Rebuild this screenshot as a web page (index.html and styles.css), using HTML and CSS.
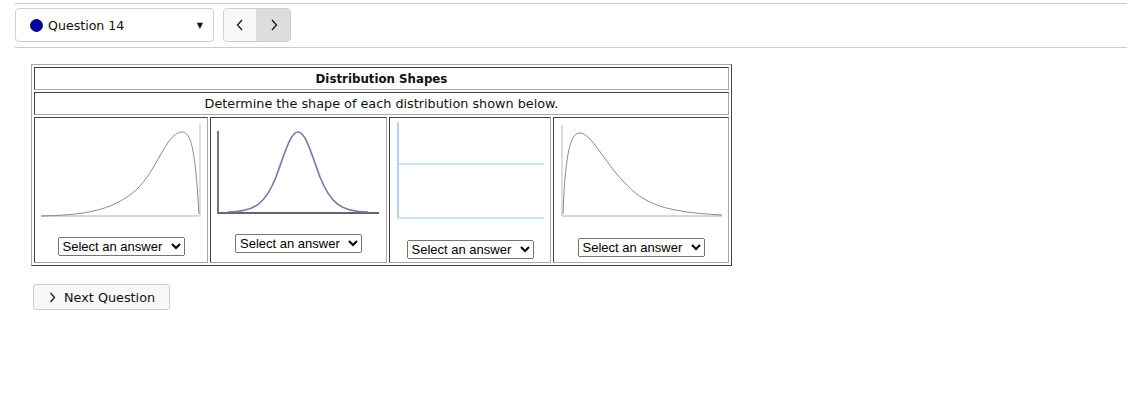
FILE: index.html
```html
<!DOCTYPE html>
<html lang="en">
<head>
    <meta charset="UTF-8">
    <title>Question 14</title>
    <link rel="stylesheet" href="styles.css">
</head>
<body>
    <div class="topbar">
        <div class="question-picker">
            <span class="dot"></span>
            <span class="question-label">Question 14</span>
            <span class="caret">&#9660;</span>
        </div>
        <div class="nav-group">
            <button class="nav-btn prev">
                <svg width="8" height="12" viewBox="0 0 8 12"><path d="M6 1 L1.5 6 L6 11" fill="none" stroke="#222" stroke-width="1.4"/></svg>
            </button>
            <button class="nav-btn next">
                <svg width="8" height="12" viewBox="0 0 8 12"><path d="M2 1 L6.5 6 L2 11" fill="none" stroke="#222" stroke-width="1.4"/></svg>
            </button>
        </div>
    </div>

    <table class="shapes">
        <tr>
            <td colspan="4" class="title">Distribution Shapes</td>
        </tr>
        <tr>
            <td colspan="4" class="intro">Determine the shape of each distribution shown below.</td>
        </tr>
        <tr class="graphs">
            <td class="cell-a">
                <!-- skewed left -->
                <svg class="graph" width="160" height="96" viewBox="0 0 160 96">
                    <line x1="0" y1="94" x2="158" y2="94" stroke="#c8c8c8" stroke-width="1.5"/>
                    <line x1="159" y1="2" x2="159" y2="94" stroke="#c8c8c8" stroke-width="1.2"/>
                    <path d="M0 94 C40 93 70 90 95 68 C115 50 125 12 140 10 C150 9 154 25 158 92" fill="none" stroke="#8a8a8a" stroke-width="1"/>
                </svg>
                <div class="answer"><select><option>Select an answer</option></select></div>
            </td>
            <td class="cell-b">
                <!-- bell -->
                <svg class="graph" width="165" height="89" viewBox="0 0 165 89">
                    <line x1="2" y1="4" x2="2" y2="87" stroke="#555" stroke-width="1.6"/>
                    <line x1="2" y1="86" x2="163" y2="86" stroke="#666" stroke-width="2"/>
                    <path d="M12 85 C40 85 50 75 60 50 C70 22 75 5 82 5 C89 5 94 22 104 50 C114 75 124 85 152 85" fill="none" stroke="#7878a8" stroke-width="1.6"/>
                </svg>
                <div class="answer"><select><option>Select an answer</option></select></div>
            </td>
            <td class="cell-c">
                <!-- uniform -->
                <svg class="graph" width="149" height="101" viewBox="0 0 149 101">
                    <line x1="2" y1="2" x2="2" y2="98" stroke="#b8d4f0" stroke-width="2"/>
                    <line x1="2" y1="44" x2="148" y2="44" stroke="#a8c8e8" stroke-width="1"/>
                    <line x1="2" y1="98" x2="148" y2="98" stroke="#a8c8e8" stroke-width="1"/>
                </svg>
                <div class="answer"><select><option>Select an answer</option></select></div>
            </td>
            <td class="cell-d">
                <!-- skewed right -->
                <svg class="graph" width="165" height="97" viewBox="0 0 165 97">
                    <line x1="3" y1="3" x2="3" y2="94" stroke="#c8c8c8" stroke-width="1.2"/>
                    <line x1="3" y1="94" x2="163" y2="94" stroke="#c8c8c8" stroke-width="1.5"/>
                    <path d="M4 92 C6 40 10 12 20 11 C32 10 45 40 65 60 C85 82 105 90 163 93" fill="none" stroke="#8a8a8a" stroke-width="1"/>
                </svg>
                <div class="answer"><select><option>Select an answer</option></select></div>
            </td>
        </tr>
    </table>

    <button class="next-question">
        <svg width="7" height="11" viewBox="0 0 7 11"><path d="M1.5 1 L5.5 5.5 L1.5 10" fill="none" stroke="#222" stroke-width="1.4"/></svg>
        <span>Next Question</span>
    </button>
</body>
</html>
```

FILE: styles.css
```css
body {
    margin: 0;
    font-family: "DejaVu Sans", Verdana, sans-serif;
    font-size: 12.8px;
    color: #111;
    background: #fff;
}
.topbar {
    display: flex;
    gap: 9px;
    margin: 3px 0 0 15px;
    padding: 4px 0 5px 0;
    border-top: 1px solid #ccc;
    border-bottom: 1px solid #ccc;
}
.question-picker {
    display: flex;
    align-items: center;
    width: 197px;
    height: 32px;
    border: 1px solid #d0d0d0;
    border-radius: 4px;
}
.dot {
    width: 11px;
    height: 11px;
    margin-left: 14px;
    border-radius: 50%;
    background: #0000a8;
    border: 1px solid #101040;
}
.question-label {
    margin-left: 5px;
    font-size: 12.6px;
}
.caret {
    margin-left: auto;
    margin-right: 10px;
    font-size: 8px;
}
.nav-group {
    display: flex;
    height: 32px;
    border: 1px solid #d0d0d0;
    border-radius: 4px;
    overflow: hidden;
}
.nav-btn {
    width: 33px;
    border: none;
    padding: 0;
    display: flex;
    align-items: center;
    justify-content: center;
}
.prev {
    background: #f7f7f7;
    border-right: 1px solid #ddd;
}
.next {
    background: #dcdcdc;
}
.shapes {
    margin: 16px 0 0 31px;
    border: 1px solid;
    border-color: #a8a8a8 #454545 #454545 #a8a8a8;
    border-spacing: 2px;
}
.shapes td {
    border: 1px solid;
    border-color: #404040 #a8a8a8 #a8a8a8 #404040;
    text-align: center;
    padding: 1px;
}
.title {
    font-weight: bold;
    font-size: 11.8px;
    height: 19px;
}
.intro {
    height: 19px;
}
.graphs td {
    vertical-align: top;
    padding: 0 1px 3px 1px;
}
.graph {
    display: block;
    margin: 0 auto;
}
.cell-a { width: 170px; }
.cell-a .graph { margin-top: 4px; }
.cell-a .answer { margin-top: 19px; }
.cell-b { width: 173px; }
.cell-b .graph { margin-top: 9px; }
.cell-b .answer { margin-top: 18px; }
.cell-c { width: 158px; }
.cell-c .graph { margin-top: 2px; }
.cell-c .answer { margin-top: 19px; }
.cell-d { width: 172px; }
.cell-d .graph { margin-top: 4px; }
.cell-d .answer { margin-top: 19px; }
.answer select {
    font-family: "Liberation Sans", Arial, sans-serif;
    font-size: 13px;
    color: #000;
    height: 19px;
    padding-right: 5px;
}
.next-question {
    display: flex;
    align-items: center;
    gap: 8px;
    margin: 18px 0 0 33px;
    height: 26px;
    padding: 0 14px 0 15px;
    border: 1px solid #ccc;
    border-radius: 3px;
    background: #f8f8f8;
    font-family: "DejaVu Sans", Verdana, sans-serif;
    font-size: 12.8px;
    color: #111;
}
```
